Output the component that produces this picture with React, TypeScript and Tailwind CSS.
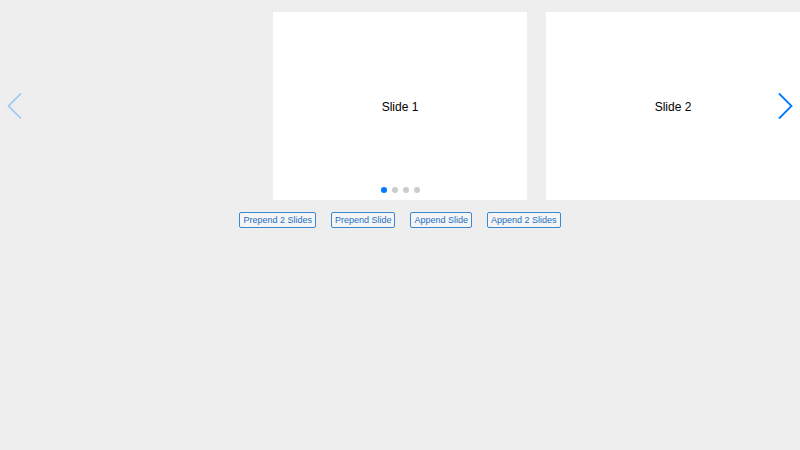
export default function App() {
  const buttons = ['Prepend 2 Slides', 'Prepend Slide', 'Append Slide', 'Append 2 Slides']
  return (
    <div className="w-[800px] h-[450px] bg-[#eeeeee] overflow-hidden pt-[12px]" style={{ fontFamily: '"Liberation Sans", Arial, sans-serif' }}>
      {/* slider */}
      <div className="relative w-full h-[188px] overflow-hidden">
        <div className="flex h-full gap-[19px] pl-[273px]">
          <div className="w-[254px] shrink-0 h-full bg-white flex items-center justify-center text-[12px] text-black pt-[1px]">Slide 1</div>
          <div className="w-[254px] shrink-0 h-full bg-white flex items-center justify-center text-[12px] text-black pt-[1px]">Slide 2</div>
        </div>

        {/* pagination */}
        <div className="absolute left-0 right-0 bottom-[7px] flex justify-center gap-[5px]">
          <span className="w-[6px] h-[6px] rounded-full bg-[#007aff]" />
          <span className="w-[6px] h-[6px] rounded-full bg-black/20" />
          <span className="w-[6px] h-[6px] rounded-full bg-black/20" />
          <span className="w-[6px] h-[6px] rounded-full bg-black/20" />
        </div>

        {/* nav */}
        <div className="absolute left-[6px] top-[80px] opacity-35">
          <svg width="17" height="28" viewBox="0 0 17 28" fill="none">
            <path d="M15 1.5L2.5 14L15 26.5" stroke="#007aff" strokeWidth="1.6" />
          </svg>
        </div>
        <div className="absolute left-[777px] top-[80px]">
          <svg width="17" height="28" viewBox="0 0 17 28" fill="none">
            <path d="M2 1.5L14.5 14L2 26.5" stroke="#007aff" strokeWidth="1.8" />
          </svg>
        </div>
      </div>

      {/* actions */}
      <div className="flex justify-center gap-[15px] mt-[12px]">
        {buttons.map(b => (
          <button key={b} className="h-[16px] px-[3px] border border-[#3b87d4] rounded-[2px] bg-[#f5f5f5] text-[#1a6fc4] text-[9px] leading-none">
            {b}
          </button>
        ))}
      </div>
    </div>
  )
}
